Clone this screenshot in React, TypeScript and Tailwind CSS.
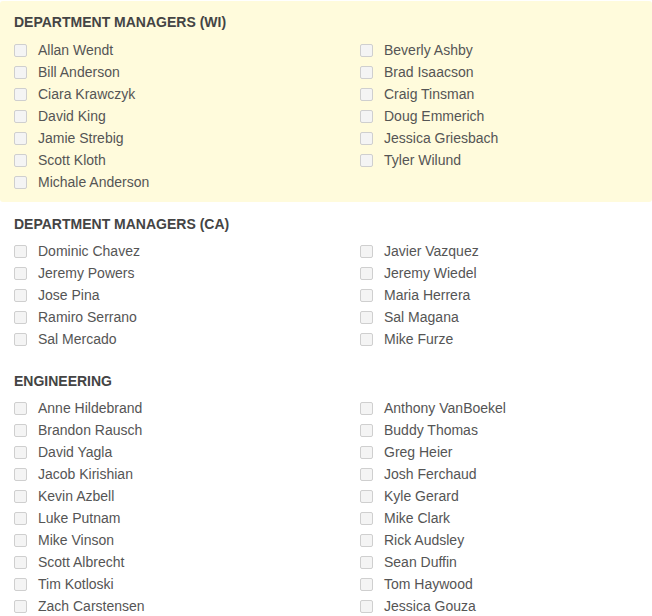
const sections = [
  {
    title: "Department Managers (WI)",
    highlight: true,
    left: ["Allan Wendt", "Bill Anderson", "Ciara Krawczyk", "David King", "Jamie Strebig", "Scott Kloth", "Michale Anderson"],
    right: ["Beverly Ashby", "Brad Isaacson", "Craig Tinsman", "Doug Emmerich", "Jessica Griesbach", "Tyler Wilund"],
  },
  {
    title: "Department Managers (CA)",
    highlight: false,
    left: ["Dominic Chavez", "Jeremy Powers", "Jose Pina", "Ramiro Serrano", "Sal Mercado"],
    right: ["Javier Vazquez", "Jeremy Wiedel", "Maria Herrera", "Sal Magana", "Mike Furze"],
  },
  {
    title: "Engineering",
    highlight: false,
    left: ["Anne Hildebrand", "Brandon Rausch", "David Yagla", "Jacob Kirishian", "Kevin Azbell", "Luke Putnam", "Mike Vinson", "Scott Albrecht", "Tim Kotloski", "Zach Carstensen"],
    right: ["Anthony VanBoekel", "Buddy Thomas", "Greg Heier", "Josh Ferchaud", "Kyle Gerard", "Mike Clark", "Rick Audsley", "Sean Duffin", "Tom Haywood", "Jessica Gouza"],
  },
];

const Person = ({ name }: { name: string }) => {
  return (
    <label className="flex h-[22px] items-center">
      <span className="h-[13px] w-[13px] shrink-0 rounded-[2px] border border-[#cfcfcf] bg-[#f4f4f4]" />
      <span className="ml-[11px] text-[14px] leading-[22px] text-[#555]">{name}</span>
    </label>
  );
};

const App = () => {
  return (
    <main className="w-[652px] bg-white font-['Liberation_Sans',Arial,sans-serif]">
      {sections.map((s) => (
        <section
          key={s.title}
          className={s.highlight ? "mt-[1px] rounded-[3px] bg-[#fffbdc] pt-[11px] pb-[9px] pl-[14px]" : "pt-3 pb-[9px] pl-[14px]"}
        >
          <h2 className="h-5 text-[14px] font-bold uppercase leading-5 text-[#444]">{s.title}</h2>
          <div className={s.highlight ? "mt-[7px] grid grid-cols-[346px_1fr]" : "mt-[6px] grid grid-cols-[346px_1fr]"}>
            <div className="flex flex-col">
              {s.left.map((n) => (
                <Person key={n} name={n} />
              ))}
            </div>
            <div className="flex flex-col">
              {s.right.map((n) => (
                <Person key={n} name={n} />
              ))}
            </div>
          </div>
        </section>
      ))}
    </main>
  );
};

export default App;
